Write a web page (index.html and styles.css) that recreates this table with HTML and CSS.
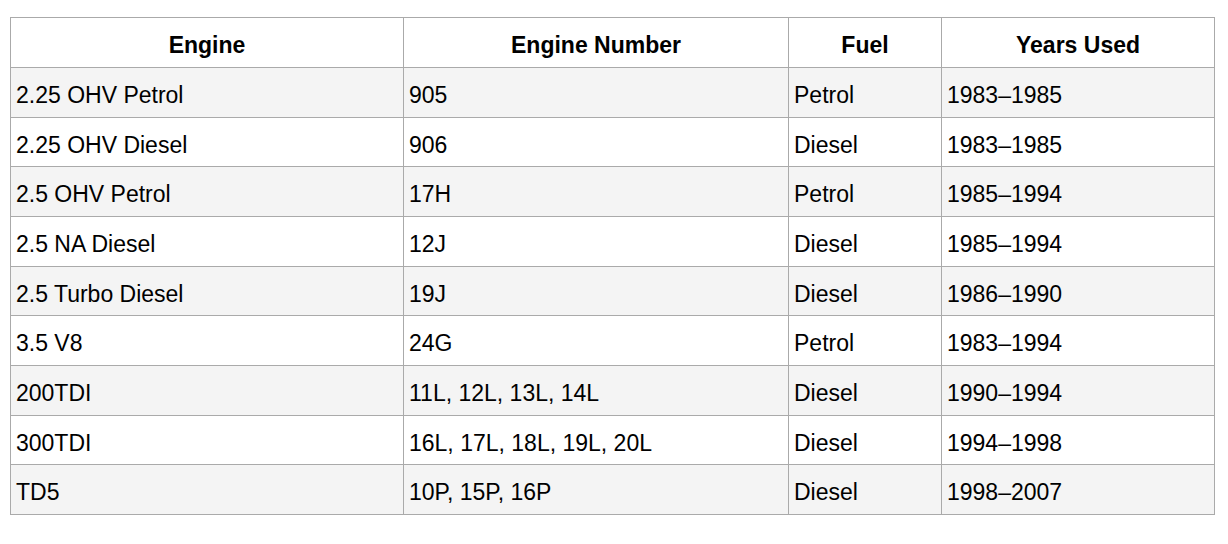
FILE: index.html
```html
<!DOCTYPE html>
<html>
<head>
<meta charset="utf-8">
<link rel="stylesheet" href="styles.css">
</head>
<body>
<table class="engines">
  <colgroup>
    <col class="c1"><col class="c2"><col class="c3"><col class="c4">
  </colgroup>
  <thead>
    <tr><th>Engine</th><th>Engine Number</th><th>Fuel</th><th>Years Used</th></tr>
  </thead>
  <tbody>
    <tr><td>2.25 OHV Petrol</td><td>905</td><td>Petrol</td><td>1983–1985</td></tr>
    <tr><td>2.25 OHV Diesel</td><td>906</td><td>Diesel</td><td>1983–1985</td></tr>
    <tr><td>2.5 OHV Petrol</td><td>17H</td><td>Petrol</td><td>1985–1994</td></tr>
    <tr><td>2.5 NA Diesel</td><td>12J</td><td>Diesel</td><td>1985–1994</td></tr>
    <tr><td>2.5 Turbo Diesel</td><td>19J</td><td>Diesel</td><td>1986–1990</td></tr>
    <tr><td>3.5 V8</td><td>24G</td><td>Petrol</td><td>1983–1994</td></tr>
    <tr><td>200TDI</td><td>11L, 12L, 13L, 14L</td><td>Diesel</td><td>1990–1994</td></tr>
    <tr><td>300TDI</td><td>16L, 17L, 18L, 19L, 20L</td><td>Diesel</td><td>1994–1998</td></tr>
    <tr><td>TD5</td><td>10P, 15P, 16P</td><td>Diesel</td><td>1998–2007</td></tr>
  </tbody>
</table>
</body>
</html>
```

FILE: styles.css
```css
html, body {
  margin: 0;
  padding: 0;
  background: #ffffff;
}
body {
  padding: 17px 0 0 10px;
  font-family: "Liberation Sans", Arial, Helvetica, sans-serif;
  color: #000;
}
.engines {
  border-collapse: collapse;
  width: 1204px;
  table-layout: fixed;
  font-size: 23px;
}
.c1 { width: 393px; }
.c2 { width: 385px; }
.c3 { width: 153px; }
.c4 { width: 273px; }
.engines th,
.engines td {
  border: 1px solid #aaaaaa;
  line-height: 26px;
}
.engines th {
  font-weight: bold;
  text-align: center;
  padding: 14px 5px 9px 5px;
}
.engines td {
  text-align: left;
  padding: 14px 5px 8.67px 5px;
}
.engines tbody tr:nth-child(odd) {
  background: #f4f4f4;
}
```
